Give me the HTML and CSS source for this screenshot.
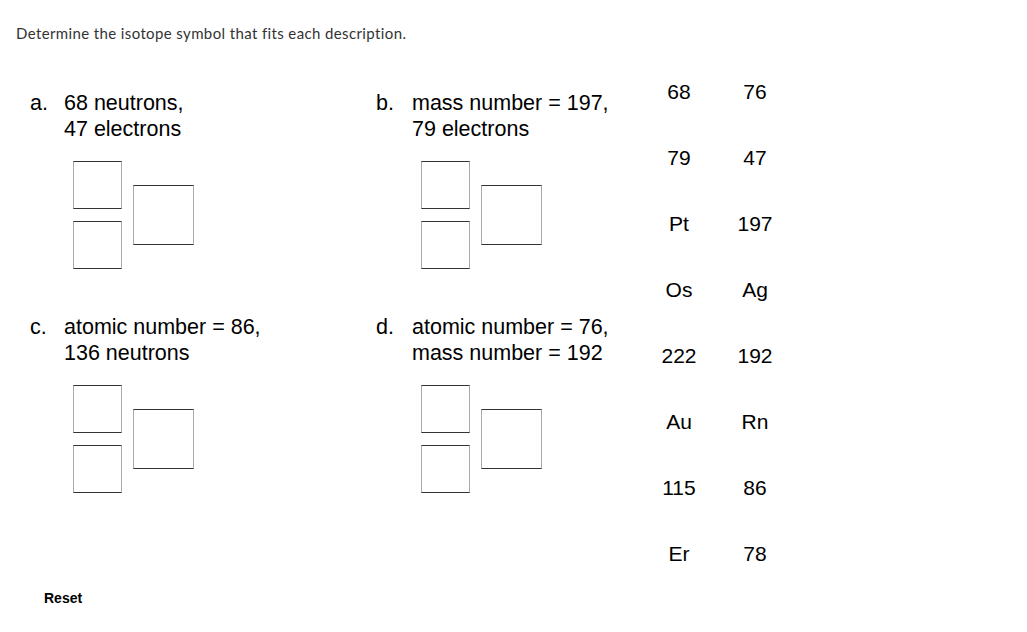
FILE: index.html
```html
<!DOCTYPE html>
<html>
<head>
<meta charset="utf-8">
<link rel="stylesheet" href="styles.css">
</head>
<body>
<div class="page">
  <p class="prompt">Determine the isotope symbol that fits each description.</p>
  <div class="main">
    <div class="questions">
      <div class="question">
        <span class="label">a.</span>
        <div class="content">
          <div class="desc">68 neutrons,<br>47 electrons</div>
          <div class="symbol">
            <div class="stack"><div class="box small"></div><div class="box small"></div></div>
            <div class="box big"></div>
          </div>
        </div>
      </div>
      <div class="question right">
        <span class="label">b.</span>
        <div class="content">
          <div class="desc">mass number = 197,<br>79 electrons</div>
          <div class="symbol">
            <div class="stack"><div class="box small"></div><div class="box small"></div></div>
            <div class="box big"></div>
          </div>
        </div>
      </div>
      <div class="question">
        <span class="label">c.</span>
        <div class="content">
          <div class="desc">atomic number = 86,<br>136 neutrons</div>
          <div class="symbol">
            <div class="stack"><div class="box small"></div><div class="box small"></div></div>
            <div class="box big"></div>
          </div>
        </div>
      </div>
      <div class="question right">
        <span class="label">d.</span>
        <div class="content">
          <div class="desc">atomic number = 76,<br>mass number = 192</div>
          <div class="symbol">
            <div class="stack"><div class="box small"></div><div class="box small"></div></div>
            <div class="box big"></div>
          </div>
        </div>
      </div>
    </div>
    <div class="bank">
      <span class="chip">68</span><span class="chip">76</span>
      <span class="chip">79</span><span class="chip">47</span>
      <span class="chip">Pt</span><span class="chip">197</span>
      <span class="chip">Os</span><span class="chip">Ag</span>
      <span class="chip">222</span><span class="chip">192</span>
      <span class="chip">Au</span><span class="chip">Rn</span>
      <span class="chip">115</span><span class="chip">86</span>
      <span class="chip">Er</span><span class="chip">78</span>
    </div>
  </div>
  <div class="reset">Reset</div>
</div>
</body>
</html>
```

FILE: styles.css
```css
html, body {
  margin: 0;
  padding: 0;
  background: #ffffff;
}

.page {
  width: 1027px;
  height: 632px;
  position: relative;
  font-family: "Liberation Sans", Arial, sans-serif;
  color: #000;
}

.prompt {
  margin: 0;
  padding: 23px 0 0 16px;
  height: 20px;
  line-height: 20px;
  font-family: "Lato", "Open Sans", sans-serif;
  font-size: 15px;
  letter-spacing: 0.38px;
  color: #333333;
}

.main {
  display: flex;
  padding-top: 16px;
}

.questions {
  display: grid;
  grid-template-columns: 346px 265px;
  grid-auto-rows: 224px;
  margin-left: 30px;
  padding-top: 31px;
}

.question {
  display: flex;
  font-size: 21.5px;
  line-height: 26px;
}

.label {
  width: 34px;
  flex: none;
}

.question.right .label {
  width: 36px;
}

.content {
  display: flex;
  flex-direction: column;
}

.symbol {
  display: flex;
  align-items: center;
  margin-top: 19px;
  margin-left: 9px;
}

.stack {
  display: flex;
  flex-direction: column;
  gap: 12px;
}

.box {
  box-sizing: border-box;
  border-top: 1px solid #333;
  border-bottom: 1px solid #333;
  border-left: 1px solid #aaa;
  border-right: 1px solid #aaa;
  background: #fff;
}

.box.small {
  width: 49px;
  height: 48px;
}

.box.big {
  width: 61px;
  height: 60px;
  margin-left: 11px;
}

.bank {
  display: grid;
  grid-template-columns: 76px 76px;
  grid-auto-rows: 66px;
}

.chip {
  display: flex;
  align-items: center;
  justify-content: center;
  font-size: 21px;
}

.reset {
  position: absolute;
  left: 44px;
  top: 589px;
  font-size: 14px;
  font-weight: bold;
  line-height: 18px;
}
```
